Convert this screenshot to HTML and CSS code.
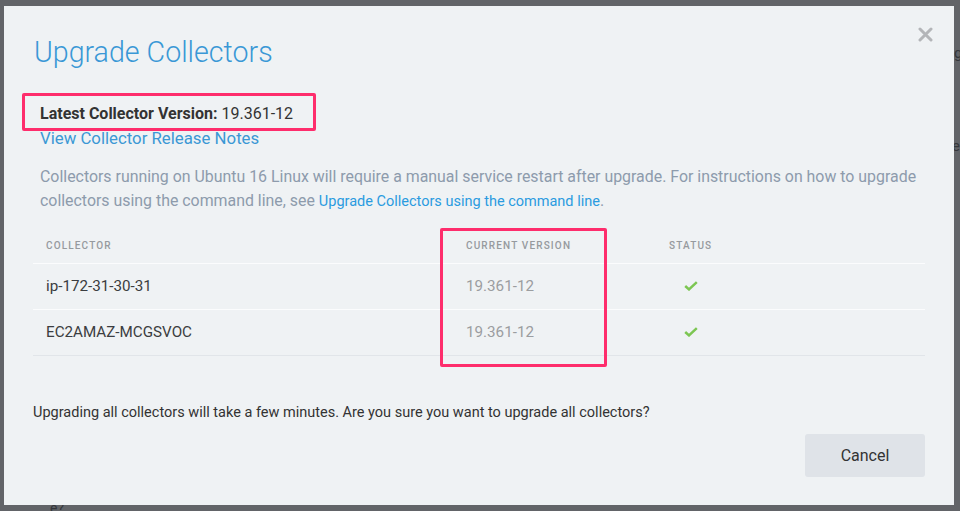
FILE: index.html
```html
<!DOCTYPE html>
<html>
<head>
<meta charset="utf-8">
<link rel="stylesheet" href="styles.css">
</head>
<body>
<div class="backdrop">
  <span class="bg-frag frag-1">g</span>
  <span class="bg-frag frag-2">es</span>
  <span class="bg-frag frag-3">e?</span>
</div>
<div class="modal">
  <button class="close" aria-label="Close">
    <svg width="15" height="15" viewBox="0 0 15 15"><path d="M2 2 L13 13 M13 2 L2 13" stroke="#b3b5b8" stroke-width="3" stroke-linecap="round"/></svg>
  </button>
  <h1 class="title">Upgrade Collectors</h1>
  <div class="info">
    <div class="latest"><strong>Latest Collector Version:</strong> 19.361-12</div>
    <a class="notes" href="#">View Collector Release Notes</a>
    <p class="note">Collectors running on Ubuntu 16 Linux will require a manual service restart after upgrade. For instructions on how to upgrade collectors using the command line, see <a href="#">Upgrade Collectors using the command line</a>.</p>
  </div>
  <table class="collectors">
    <thead>
      <tr><th class="c-name">Collector</th><th class="c-ver">Current Version</th><th class="c-status">Status</th></tr>
    </thead>
    <tbody>
      <tr><td>ip-172-31-30-31</td><td class="ver">19.361-12</td><td class="status"><svg width="14" height="10" viewBox="0 0 14 10"><path d="M1.2 5 L5 8.4 L12.8 1.2" fill="none" stroke="#7cc652" stroke-width="2.5"/></svg></td></tr>
      <tr><td>EC2AMAZ-MCGSVOC</td><td class="ver">19.361-12</td><td class="status"><svg width="14" height="10" viewBox="0 0 14 10"><path d="M1.2 5 L5 8.4 L12.8 1.2" fill="none" stroke="#7cc652" stroke-width="2.5"/></svg></td></tr>
    </tbody>
  </table>
  <p class="confirm">Upgrading all collectors will take a few minutes. Are you sure you want to upgrade all collectors?</p>
  <div class="actions"><button class="btn">Cancel</button></div>
  <div class="mark mark-latest"></div>
  <div class="mark mark-version"></div>
</div>
</body>
</html>
```
FILE: styles.css
```css
* { box-sizing: border-box; }
html, body { margin: 0; }
body {
  width: 960px;
  height: 511px;
  overflow: hidden;
  background: #626468;
  padding: 6px 6px 6px 4px;
  font-family: Roboto, "Liberation Sans", sans-serif;
  position: relative;
}
.backdrop { position: absolute; inset: 0; }
.bg-frag {
  position: absolute;
  color: #35373b;
  font-size: 15px;
  font-family: Roboto, sans-serif;
}
.frag-1 { left: 954px; top: 44px; }
.frag-2 { left: 952px; top: 137px; }
.frag-3 { left: 50px; top: 500px; font-size: 14px; }

.modal {
  position: relative;
  width: 950px;
  height: 499px;
  background: #eff2f4;
  padding: 28px 29px 0 29px;
}
.close {
  position: absolute;
  top: 21px;
  right: 21px;
  background: none;
  border: 0;
  padding: 0;
  width: 15px;
  height: 15px;
  display: block;
}
.close svg { display: block; }
.title {
  margin: 0 0 0 1px;
  font-size: 28.6px;
  line-height: 36px;
  font-weight: 300;
  color: #3a98d6;
}
.info {
  margin-top: 32px;
  padding-left: 7px;
}
.latest {
  font-size: 16px;
  line-height: 24px;
  color: #333;
}
.latest strong { font-weight: 700; }
.notes {
  display: block;
  font-size: 16.8px;
  line-height: 24px;
  color: #3b98d5;
  text-decoration: none;
}
.note {
  margin: 15px 0 0;
  font-size: 15.9px;
  line-height: 24px;
  color: #8d9bac;
}
.note a { color: #2a9be0; text-decoration: none; font-size: 14.5px; }

.collectors {
  margin-top: 16px;
  width: 892px;
  border-collapse: collapse;
  table-layout: fixed;
}
.collectors th {
  text-align: left;
  font-size: 10px;
  line-height: 16px;
  font-weight: 500;
  letter-spacing: 1.15px;
  text-transform: uppercase;
  color: #969a9e;
  padding: 8px 13px 9px;
}
.c-name { width: 420px; }
.c-ver { width: 203px; }
.collectors td {
  font-size: 15.2px;
  line-height: 20px;
  color: #3b3d40;
  padding: 12px 13px 13px;
  border-top: 1px solid #fbfcfd;
}
.collectors tbody tr:last-child td { border-bottom: 1px solid #e1e5e9; }
.collectors td.ver { color: #9b9da0; }
.collectors td.status { padding-left: 28px; }
.status svg { display: block; }

.confirm {
  margin: 47px 0 0;
  font-size: 14.5px;
  line-height: 20px;
  color: #333;
}
.actions {
  display: flex;
  justify-content: flex-end;
  margin-top: 11px;
}
.btn {
  width: 120px;
  height: 43px;
  background: #dfe3e8;
  border: 0;
  border-radius: 3px;
  font-family: Roboto, "Liberation Sans", sans-serif;
  font-size: 16px;
  color: #333;
}

.mark {
  position: absolute;
  border: 3px solid #fe2d6c;
  border-radius: 2px;
}
.mark-latest { left: 18px; top: 87px; width: 294px; height: 38px; }
.mark-version { left: 436px; top: 222px; width: 167px; height: 139px; }
```
